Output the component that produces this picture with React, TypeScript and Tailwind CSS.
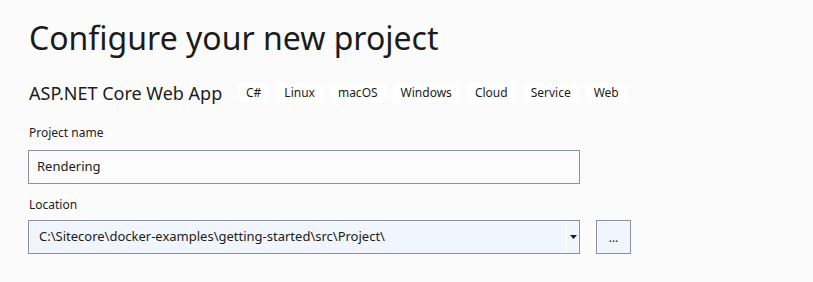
import React from "react";

const tags = ["C#", "Linux", "macOS", "Windows", "Cloud", "Service", "Web"];

export default function App() {
  return (
    <div
      className="w-[813px] h-[282px] bg-[#fbfbfb] text-[#1b1b1b] pl-[28px] pt-[16px]"
      style={{ fontFamily: '"Segoe UI", "Noto Sans", "Open Sans", sans-serif' }}
    >
      <h1 className="text-[32px] leading-[44px] ml-[1px] tracking-[0px]">Configure your new project</h1>
      <div className="flex items-center mt-[23px] h-[20px]">
        <div className="text-[18px] leading-[20px] ml-[1px] w-[209px]">ASP.NET Core Web App</div>
        <div className="flex gap-[7px]">
          {tags.map((t) => (
            <span
              key={t}
              className="bg-white rounded-[4px] h-[20px] px-[8px] text-[12px] leading-[20px] text-[#1b1b1b]"
            >
              {t}
            </span>
          ))}
        </div>
      </div>
      <div className="text-[12px] leading-[16px] mt-[22px] ml-[1px]">Project name</div>
      <div className="mt-[9px] w-[552px] h-[34px] border border-[#8992a5] bg-[#fcfcfc] flex items-center px-[8px] text-[13px]">
        Rendering
      </div>
      <div className="text-[12px] leading-[16px] mt-[13px] ml-[1px]">Location</div>
      <div className="flex mt-[7px] gap-[16px]">
        <div className="w-[552px] h-[34px] border border-[#8992a5] bg-[#f1f5fd] flex items-center text-[13px]">
          <div className="flex-1 pl-[10px]">C:\Sitecore\docker-examples\getting-started\src\Project\</div>
          <div className="w-px h-full bg-white" />
          <div className="w-[12px] flex items-center justify-center">
            <svg width="7" height="4" viewBox="0 0 7 4">
              <path d="M0 0h7L3.5 4z" fill="#1b1b1b" />
            </svg>
          </div>
        </div>
        <div className="w-[35px] h-[34px] border border-[#8992a5] bg-[#f1f5fd] flex items-center justify-center text-[12px] pt-[2px]">
          ...
        </div>
      </div>
    </div>
  );
}
